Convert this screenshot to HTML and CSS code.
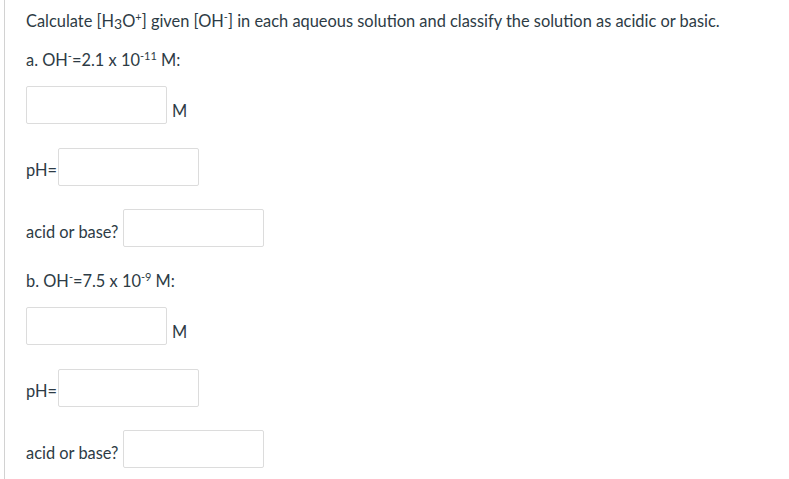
FILE: index.html
```html
<!DOCTYPE html>
<html>
<head>
<meta charset="utf-8">
<link rel="stylesheet" href="styles.css">
</head>
<body>
<div class="page">
  <p class="title">Calculate [H<sub>3</sub>O<sup>+</sup>] given [OH<sup>-</sup>] in each aqueous solution and classify the solution as acidic or basic.</p>

  <p class="part">a. OH<sup>-</sup>=2.1 x 10<sup>-11</sup> M:</p>
  <div class="row first"><span class="box"></span><span class="unit">M</span></div>
  <div class="row ph"><span class="label">pH=</span><span class="box"></span></div>
  <div class="row ab"><span class="label">acid or base?</span><span class="box"></span></div>

  <p class="part partb">b. OH<sup>-</sup>=7.5 x 10<sup>-9</sup> M:</p>
  <div class="row first"><span class="box"></span><span class="unit">M</span></div>
  <div class="row ph"><span class="label">pH=</span><span class="box"></span></div>
  <div class="row ab"><span class="label">acid or base?</span><span class="box"></span></div>
</div>
</body>
</html>
```

FILE: styles.css
```css
html, body {
  margin: 0;
  padding: 0;
  background: #ffffff;
}
body {
  font-family: Lato, "Liberation Sans", sans-serif;
  color: #2d3b45;
  font-size: 16.4px;
}
.page {
  margin-left: 4px;
  border-left: 1px solid #d2d2d2;
  padding-left: 21px;
  padding-top: 11px;
  min-height: 479px;
  box-sizing: border-box;
}
p {
  margin: 0;
  line-height: 20px;
}
sup, sub {
  line-height: 0;
}
sup {
  font-size: 11px;
  vertical-align: 6px;
}
sub {
  font-size: 14px;
  vertical-align: -2px;
}
.part {
  margin-top: 19px;
}
.partb {
  margin-top: 24px;
}
.row {
  display: flex;
  align-items: center;
  height: 38px;
}
.row.first {
  margin-top: 16px;
}
.row.ph {
  margin-top: 24px;
}
.row.ab {
  margin-top: 23px;
}
.box {
  display: block;
  width: 141px;
  height: 38px;
  box-sizing: border-box;
  border: 1px solid #dcdcdc;
  border-radius: 2px;
  background: #fff;
}
.label {
  padding-top: 4px;
  margin-right: 1px;
}
.ab .label {
  padding-top: 6px;
  margin-right: 5px;
}
.unit {
  margin-left: 5px;
  padding-top: 10px;
}
```
